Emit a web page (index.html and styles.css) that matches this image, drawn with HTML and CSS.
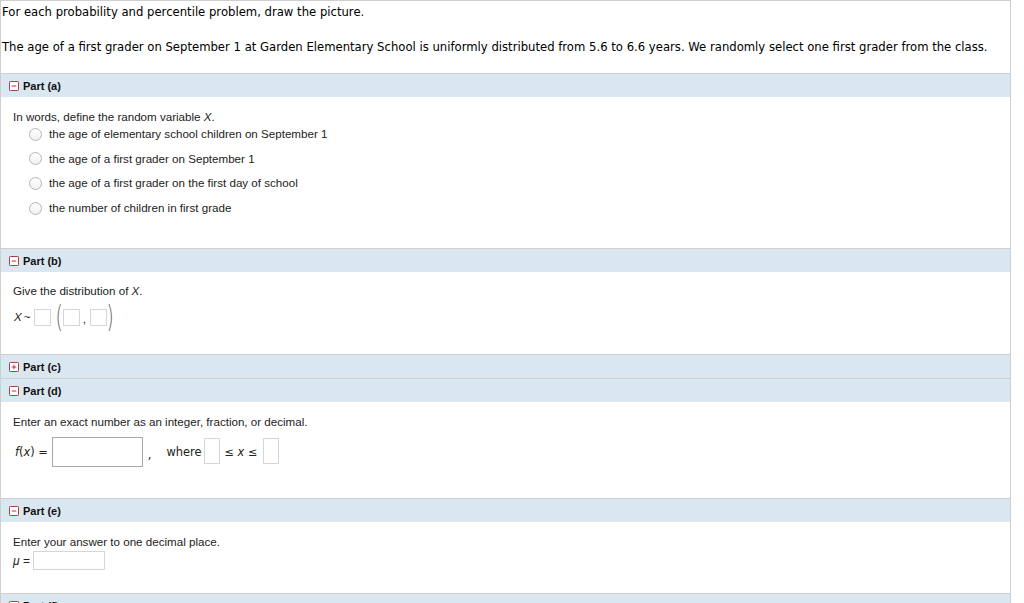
FILE: index.html
```html
<!DOCTYPE html>
<html lang="en">
<head>
    <meta charset="UTF-8">
    <title>Uniform Distribution Problem</title>
    <link rel="stylesheet" href="styles.css">
</head>
<body>
    <div class="container">
        <div class="intro">
            <p>For each probability and percentile problem, draw the picture.</p>
            <p class="question">The age of a first grader on September 1 at Garden Elementary School is uniformly distributed from 5.6 to 6.6 years. We randomly select one first grader from the class.</p>
        </div>

        <!-- Part (a) -->
        <div class="part">
            <div class="part-header">
                <svg class="toggle" width="11" height="11" viewBox="0 0 11 11"><rect x="0.5" y="0.5" width="10" height="10" rx="1" fill="#fff" stroke="#a0262b"/><line x1="3" y1="5.5" x2="8" y2="5.5" stroke="#a0262b"/></svg>
                <span>Part (a)</span>
            </div>
            <div class="part-body part-a">
                <p>In words, define the random variable <i>X</i>.</p>
                <ul class="choices">
                    <li><span class="radio"></span>the age of elementary school children on September 1</li>
                    <li><span class="radio"></span>the age of a first grader on September 1</li>
                    <li><span class="radio"></span>the age of a first grader on the first day of school</li>
                    <li><span class="radio"></span>the number of children in first grade</li>
                </ul>
            </div>
        </div>

        <!-- Part (b) -->
        <div class="part">
            <div class="part-header">
                <svg class="toggle" width="11" height="11" viewBox="0 0 11 11"><rect x="0.5" y="0.5" width="10" height="10" rx="1" fill="#fff" stroke="#a0262b"/><line x1="3" y1="5.5" x2="8" y2="5.5" stroke="#a0262b"/></svg>
                <span>Part (b)</span>
            </div>
            <div class="part-body part-b">
                <p>Give the distribution of <i>X</i>.</p>
                <div class="dist-row">
                    <i class="var">X</i><span class="tilde">~</span>
                    <span class="box"></span>
                    <span class="paren open">(</span>
                    <span class="box"></span><span class="comma">,</span><span class="box"></span>
                    <span class="paren close">)</span>
                </div>
            </div>
        </div>

        <!-- Part (c) collapsed -->
        <div class="part">
            <div class="part-header">
                <svg class="toggle" width="11" height="11" viewBox="0 0 11 11"><rect x="0.5" y="0.5" width="10" height="10" rx="1" fill="#fff" stroke="#a0262b"/><line x1="3" y1="5.5" x2="8" y2="5.5" stroke="#a0262b"/><line x1="5.5" y1="3" x2="5.5" y2="8" stroke="#a0262b"/></svg>
                <span>Part (c)</span>
            </div>
        </div>

        <!-- Part (d) -->
        <div class="part">
            <div class="part-header">
                <svg class="toggle" width="11" height="11" viewBox="0 0 11 11"><rect x="0.5" y="0.5" width="10" height="10" rx="1" fill="#fff" stroke="#a0262b"/><line x1="3" y1="5.5" x2="8" y2="5.5" stroke="#a0262b"/></svg>
                <span>Part (d)</span>
            </div>
            <div class="part-body part-d">
                <p>Enter an exact number as an integer, fraction, or decimal.</p>
                <div class="pdf-row">
                    <span class="fx"><i>f</i>(<i>x</i>) =</span>
                    <span class="answer-box"></span>
                    <span class="comma">,</span>
                    <span class="where">where</span>
                    <span class="box tall"></span>
                    <span class="ineq">&le; <i>x</i> &le;</span>
                    <span class="box tall"></span>
                </div>
            </div>
        </div>

        <!-- Part (e) -->
        <div class="part">
            <div class="part-header">
                <svg class="toggle" width="11" height="11" viewBox="0 0 11 11"><rect x="0.5" y="0.5" width="10" height="10" rx="1" fill="#fff" stroke="#a0262b"/><line x1="3" y1="5.5" x2="8" y2="5.5" stroke="#a0262b"/></svg>
                <span>Part (e)</span>
            </div>
            <div class="part-body part-e">
                <p>Enter your answer to one decimal place.</p>
                <div class="mu-row">
                    <span class="mu"><i>&mu;</i> =</span>
                    <span class="mu-box"></span>
                </div>
            </div>
        </div>

        <!-- Part (f) -->
        <div class="part">
            <div class="part-header">
                <svg class="toggle" width="11" height="11" viewBox="0 0 11 11"><rect x="0.5" y="0.5" width="10" height="10" rx="1" fill="#fff" stroke="#a0262b"/><line x1="3" y1="5.5" x2="8" y2="5.5" stroke="#a0262b"/></svg>
                <span>Part (f)</span>
            </div>
        </div>
    </div>
</body>
</html>
```

FILE: styles.css
```css
* {
    margin: 0;
    padding: 0;
    box-sizing: border-box;
}

body {
    background-color: #fff;
    color: #000;
    font-family: "Liberation Sans", Arial, sans-serif;
    font-size: 11.6px;
    height: 603px;
    overflow: hidden;
}

ul {
    list-style: none;
}

.container {
    width: 1011px;
    border: 1px solid #cfcfcf;
    border-bottom: none;
}

.intro {
    font-family: "DejaVu Sans", Verdana, sans-serif;
    font-size: 11.65px;
    line-height: 14px;
    padding: 4px 1px 19px;
}

.intro .question {
    margin-top: 21px;
}

.part-header {
    display: flex;
    align-items: center;
    gap: 4px;
    height: 24px;
    padding-left: 8px;
    background-color: #dae6f0;
    border-top: 1px solid #cfcfcf;
    font-weight: bold;
    font-size: 11px;
    color: #111;
}

.toggle {
    display: block;
    width: 10px;
    height: 10px;
}

.part-body {
    padding-left: 12px;
    color: #222;
    line-height: 14px;
}

.part-a {
    padding-top: 13px;
    height: 151px;
}

.choices {
    margin-top: 5px;
}

.choices li {
    display: flex;
    align-items: center;
    height: 24.6px;
    padding-left: 17px;
    margin-top: -7px;
}

.choices li + li {
    margin-top: 0;
}

.radio {
    width: 13px;
    height: 13px;
    border: 1px solid #b5b5b5;
    border-radius: 50%;
    background: linear-gradient(#fff, #f1f1f1);
    margin-right: 7px;
    margin-left: -1px;
}

.part-b {
    padding-top: 12px;
    height: 82px;
}

.dist-row {
    display: flex;
    align-items: center;
    height: 28px;
    margin-top: 5px;
}

.var {
    margin-left: 1px;
}

.tilde {
    margin-left: 2px;
    margin-right: 3px;
}

.box {
    display: inline-block;
    width: 17px;
    height: 17px;
    border: 1px solid #d6d6d6;
    background: #fff;
}

.paren {
    font-family: "DejaVu Sans", sans-serif;
    font-size: 31px;
    font-weight: 200;
    color: #666;
    line-height: 28px;
    transform: scaleX(0.6);
}

.paren.open {
    margin: 0 -2px 3px 2px;
}

.paren.close {
    margin: 0 0 3px -3px;
}

.dist-row .comma {
    margin: 4px 4px 0 3px;
}

.part-d {
    padding-top: 13px;
    height: 96px;
}

.pdf-row {
    display: flex;
    align-items: center;
    margin-top: 8px;
    height: 30px;
    font-family: "DejaVu Sans", Verdana, sans-serif;
    font-size: 11.4px;
}

.fx {
    margin-left: 2px;
    margin-right: 4px;
}

.answer-box {
    width: 91px;
    height: 30px;
    border: 1px solid #a9a9a9;
    background: #fff;
}

.pdf-row .comma {
    margin: 6px 15px 0 5px;
}

.where {
    margin-right: 3px;
}

.box.tall {
    width: 16px;
    height: 26px;
    margin-bottom: 3px;
}

.ineq {
    margin: 0 5px 0 4px;
}

.part-e {
    padding-top: 13px;
    height: 71px;
}

.mu-row {
    display: flex;
    align-items: center;
    margin-top: 2px;
}

.mu {
    margin-right: 3px;
    font-size: 12px;
}

.mu-box {
    width: 72px;
    height: 19px;
    border: 1px solid #d6d6d6;
    background: #fff;
}
```
